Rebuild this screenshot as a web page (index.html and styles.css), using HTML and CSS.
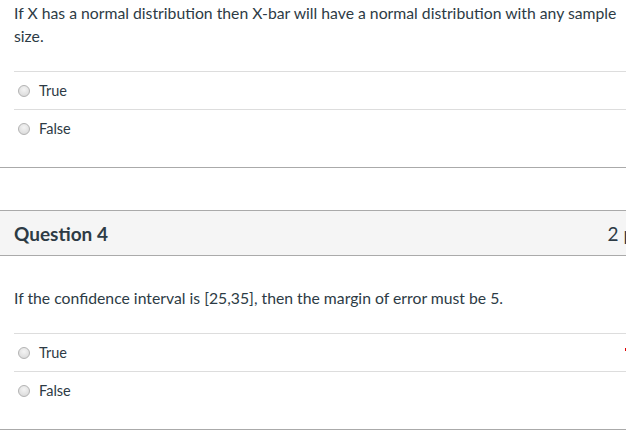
FILE: index.html
```html
<!DOCTYPE html>
<html>
<head>
<meta charset="utf-8">
<link rel="stylesheet" href="styles.css">
</head>
<body>
<div class="page">
  <div class="question">
    <div class="qbody first">
      <div class="qtext">If X has a normal distribution then X-bar will have a normal distribution with any sample size.</div>
      <div class="answers">
        <div class="answer"><span class="radio"></span><span class="label">True</span></div>
        <div class="answer"><span class="radio"></span><span class="label">False</span></div>
      </div>
    </div>
  </div>

  <div class="question">
    <div class="qheader">
      <span class="qtitle">Question 4</span>
      <span class="qpoints">2 pts</span>
    </div>
    <div class="qbody">
      <div class="qtext">If the confidence interval is [25,35], then the margin of error must be 5.</div>
      <div class="answers">
        <div class="answer"><span class="radio"></span><span class="label">True</span><span class="mark"></span></div>
        <div class="answer"><span class="radio"></span><span class="label">False</span></div>
      </div>
    </div>
  </div>
</div>
</body>
</html>
```
FILE: styles.css
```css
html, body {
  margin: 0;
  padding: 0;
  overflow: hidden;
  background: #ffffff;
}
body {
  font-family: Lato, "Open Sans", "Liberation Sans", sans-serif;
  color: #2d3b45;
  font-size: 15.75px;
  line-height: 23px;
}
.page {
  width: 665px;
  display: flex;
  flex-direction: column;
  gap: 42px;
}
.question {
  border-bottom: 1px solid #aaaaaa;
}
.question + .question {
  border-top: 1px solid #aaaaaa;
}
.qheader {
  height: 44px;
  background: #f5f5f5;
  border-bottom: 1px solid #aaaaaa;
  padding: 0 16px 0 14px;
  display: flex;
  align-items: center;
  justify-content: space-between;
}
.qtitle {
  font-size: 19px;
  font-weight: 700;
}
.qpoints {
  font-size: 19px;
}
.qbody {
  padding: 30px 14px 20px;
}
.qbody.first {
  padding-top: 1px;
}
.qtext {
  max-width: 620px;
}
.answers {
  margin-top: 24px;
}
.answer {
  height: 37px;
  border-top: 1px solid #dddddd;
  display: flex;
  align-items: center;
  padding-left: 4px;
  font-size: 14.5px;
}
.radio {
  width: 10px;
  height: 10px;
  border-radius: 50%;
  border: 1px solid #b3b3b3;
  background: radial-gradient(circle at 50% 35%, #f4f4f4 0%, #e2e2e2 60%, #d2d2d2 100%);
  margin-right: 9px;
  flex: none;
}
.mark {
  width: 2px;
  height: 3px;
  background: #e00000;
  margin-left: auto;
  margin-right: 24px;
  margin-bottom: 6px;
}
```
